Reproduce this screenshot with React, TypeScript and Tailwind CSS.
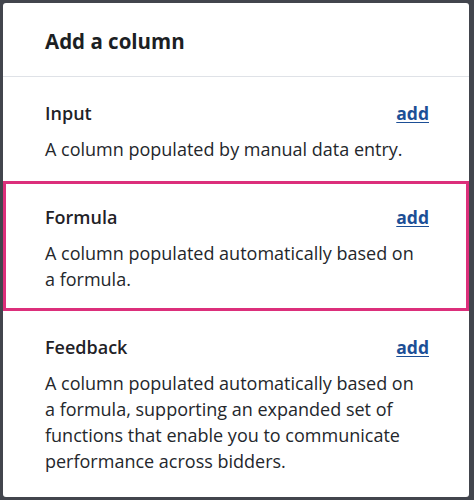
import React from "react";

const sections = [
  { title: "Input", desc: "A column populated by manual data entry.", active: false },
  { title: "Formula", desc: "A column populated automatically based on a formula.", active: true },
  {
    title: "Feedback",
    desc: "A column populated automatically based on a formula, supporting an expanded set of functions that enable you to communicate performance across bidders.",
    active: false,
  },
];

export default function App() {
  return (
    <div
      className="w-[474px] h-[500px] bg-[#42454d] pl-[3px] pr-[5px] pt-[3px] pb-[3px]"
      style={{ fontFamily: '"Open Sans", "Noto Sans", sans-serif' }}
    >
      <div className="h-full bg-white rounded-[3px] flex flex-col overflow-hidden">
        <div className="h-[74px] flex items-center pl-[42px] pt-[3px] border-b border-[#dfe2e7]">
          <h1 className="text-[20.5px] font-bold text-[#1c1f24]">Add a column</h1>
        </div>
        {sections.map((s) => (
          <div
            key={s.title}
            className={
              "pl-[42px] pr-[40px] pt-[23px] pb-[19px] " +
              (s.active ? "ring-[3px] ring-inset ring-[#dc2f7b]" : "")
            }
          >
            <div className="flex items-center justify-between h-[26px]">
              <span className="text-[18px] font-semibold text-[#1f2227]">{s.title}</span>
              <a href="#" className="text-[17.5px] font-bold text-[#1d4f96] underline underline-offset-2 decoration-1">
                add
              </a>
            </div>
            <p className="mt-[10px] text-[18px] leading-[26px] text-[#24272c] mr-[4px]">{s.desc}</p>
          </div>
        ))}
      </div>
    </div>
  );
}
